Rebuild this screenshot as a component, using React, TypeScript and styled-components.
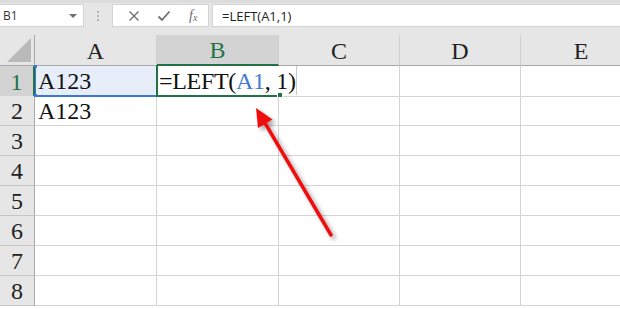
import styled, { createGlobalStyle, css } from "styled-components";

const GlobalStyle = createGlobalStyle`
  html, body {
    margin: 0;
    padding: 0;
    background: #ffffff;
  }
  body {
    width: 620px;
    height: 309px;
    overflow: hidden;
  }
`

const COLS = ["A", "B", "C", "D", "E"]
const ROWS = [1, 2, 3, 4, 5, 6, 7, 8]
const GREEN = "#217346"
const BLUE = "#3a78d6"

const App = () => {
  return (
    <Page>
      <GlobalStyle />
      <Toolbar>
        <NameBox>
          <span>B1</span>
          <Caret />
        </NameBox>
        <Grip>
          <i />
          <i />
          <i />
        </Grip>
        <ButtonBox>
          <ToolIcon>
            <svg width="12" height="12" viewBox="0 0 12 12">
              <path d="M1.5 1.5 L10.5 10.5 M10.5 1.5 L1.5 10.5" stroke="#707070" strokeWidth="1.4" fill="none" />
            </svg>
          </ToolIcon>
          <ToolIcon>
            <svg width="14" height="12" viewBox="0 0 14 12">
              <path d="M1.5 6.5 L5 10 L12.5 1.5" stroke="#707070" strokeWidth="1.8" fill="none" />
            </svg>
          </ToolIcon>
          <ToolIcon>
            <Fx>
              f<sub>x</sub>
            </Fx>
          </ToolIcon>
        </ButtonBox>
        <FormulaInput>=LEFT(A1,1)</FormulaInput>
      </Toolbar>

      <Sheet>
        <Corner>
          <svg width="24" height="24" viewBox="0 0 24 24">
            <polygon points="24,0 24,24 0,24" fill="#b9b9b9" />
          </svg>
        </Corner>
        {COLS.map((c) => (
          <ColHead key={c} $active={c === "B"}>
            {c}
          </ColHead>
        ))}

        {ROWS.map((r) => (
          <Row key={r}>
            <RowHead $active={r === 1} $first={r === 1}>
              {r}
            </RowHead>
            {COLS.map((c) => {
              if (r === 1 && c === "A") {
                return (
                  <RefCell key={c} $first>
                    A123
                    <Handle $x="left" $y="top" />
                    <Handle $x="right" $y="top" />
                    <Handle $x="left" $y="bottom" />
                    <Handle $x="right" $y="bottom" />
                  </RefCell>
                )
              }
              if (r === 1 && c === "B") {
                return (
                  <ActiveCell key={c}>
                    <EditBox>
                      =LEFT(<Ref>A1</Ref>, 1)
                    </EditBox>
                    <FillHandle />
                  </ActiveCell>
                )
              }
              return (
                <Cell key={c} $first={r === 1}>
                  {r === 2 && c === "A" ? "A123" : ""}
                </Cell>
              )
            })}
          </Row>
        ))}
      </Sheet>

      <Arrow width="620" height="309" viewBox="0 0 620 309">
        <defs>
          <filter id="sh" x="-20%" y="-20%" width="140%" height="140%">
            <feDropShadow dx="3" dy="3" stdDeviation="2" floodColor="#000" floodOpacity="0.35" />
          </filter>
        </defs>
        <g filter="url(#sh)">
          <line x1="331" y1="235" x2="265" y2="123" stroke="#f01010" strokeWidth="3.5" strokeLinecap="round" />
          <polygon points="256,108 272.5,119.5 258,128" fill="#f01010" />
        </g>
      </Arrow>
    </Page>
  )
}

export default App

const Page = styled.div`
  position: relative;
  width: 620px;
  height: 309px;
  overflow: hidden;
  background: #ffffff;
`

const Toolbar = styled.div`
  height: 36px;
  box-sizing: border-box;
  padding-top: 4px;
  background: #e6e6e6;
  border-top: 3px solid #dcdcdc;
  padding-top: 1px;
  display: flex;
  align-items: flex-start;
`

const boxBase = css`
  height: 23px;
  box-sizing: border-box;
  background: #ffffff;
  border: 1px solid #d4d4d4;
  display: flex;
  align-items: center;
`

const NameBox = styled.div`
  ${boxBase};
  width: 84px;
  border-left: none;
  padding: 0 4px 0 3px;
  justify-content: space-between;
  font-family: "Open Sans", "Noto Sans", sans-serif;
  font-size: 12px;
  color: #333333;
`

const Caret = styled.span`
  width: 0;
  height: 0;
  border-left: 4px solid transparent;
  border-right: 4px solid transparent;
  border-top: 4px solid #6f6f6f;
  margin-right: 2px;
`

const Grip = styled.div`
  width: 28px;
  height: 23px;
  display: flex;
  flex-direction: column;
  align-items: center;
  justify-content: center;
  gap: 2px;

  i {
    display: block;
    width: 2px;
    height: 2px;
    background: #b5b5b5;
  }
`

const ButtonBox = styled.div`
  ${boxBase};
  width: 97px;
  padding-left: 6px;
  gap: 0;
`

const ToolIcon = styled.div`
  width: 31px;
  height: 21px;
  display: flex;
  align-items: center;
  justify-content: center;
`

const Fx = styled.span`
  font-family: "Liberation Serif", serif;
  font-style: italic;
  font-size: 14px;
  color: #6a6a6a;

  sub {
    font-size: 10px;
    vertical-align: -1px;
  }
`

const FormulaInput = styled.div`
  ${boxBase};
  flex: 1;
  margin-left: 3px;
  border-right: none;
  padding-left: 9px;
  font-family: "Open Sans", "Noto Sans", sans-serif;
  font-size: 13px;
  color: #222222;
`

const Sheet = styled.div`
  display: grid;
  grid-template-columns: 35px 122px 122px 121px 121px 121px;
  grid-auto-rows: 30px;
  grid-template-rows: 31px;
  background: #ffffff;
  font-family: "Liberation Serif", "Times New Roman", serif;
  font-size: 24px;
  color: #111111;
  margin-top: -1px;
`

const Row = styled.div`
  display: contents;
`

const Corner = styled.div`
  background: #e6e6e6;
  border-right: 1px solid #a9a9a9;
  border-bottom: 1px solid #a9a9a9;
  display: flex;
  align-items: flex-end;
  justify-content: flex-end;
  padding: 0 3px 3px 0;
`

const ColHead = styled.div<{ $active?: boolean }>`
  background: ${(p) => (p.$active ? "#d3d3d3" : "#e6e6e6")};
  border-right: 1px solid #cfcfcf;
  border-bottom: ${(p) => (p.$active ? `2px solid ${GREEN}` : "1px solid #a9a9a9")};
  color: ${(p) => (p.$active ? GREEN : "#222222")};
  display: flex;
  align-items: center;
  justify-content: center;
  padding-top: 2px;
`

const RowHead = styled.div<{ $active?: boolean; $first?: boolean }>`
  background: ${(p) => (p.$active ? "#d3d3d3" : "#e6e6e6")};
  border-right: ${(p) => (p.$active ? `2px solid ${GREEN}` : "1px solid #a9a9a9")};
  border-bottom: 1px solid #c6c6c6;
  color: ${(p) => (p.$active ? GREEN : "#222222")};
  height: ${(p) => (p.$first ? "31px" : "30px")};
  box-sizing: border-box;
  display: flex;
  align-items: center;
  justify-content: center;
  padding-top: 2px;
`

const Cell = styled.div<{ $first?: boolean }>`
  border-right: 1px solid #d4d4d4;
  border-bottom: 1px solid #d4d4d4;
  height: ${(p) => (p.$first ? "31px" : "30px")};
  box-sizing: border-box;
  display: flex;
  align-items: center;
  padding: 2px 0 0 3px;
  white-space: nowrap;
`

const RefCell = styled(Cell)`
  position: relative;
  background: #e7eefa;
  border-left: 1px solid ${BLUE};
  border-bottom: 2px solid ${BLUE};
  border-right: none;
  padding-left: 2px;
`

const Handle = styled.span<{ $x: "left" | "right"; $y: "top" | "bottom" }>`
  position: absolute;
  width: 3px;
  height: 3px;
  background: ${BLUE};
  ${(p) => (p.$x === "left" ? "left: -2px;" : "right: -2px;")}
  ${(p) => (p.$y === "top" ? "top: -1px;" : "bottom: -2px;")}
`

const ActiveCell = styled.div`
  position: relative;
  height: 31px;
  box-sizing: border-box;
  border-left: 2px solid ${GREEN};
  border-bottom: 2px solid ${GREEN};
  border-top: 1px solid ${GREEN};
  margin-left: -1px;
  margin-top: -1px;
  height: 32px;
  z-index: 2;
`

const EditBox = styled.div`
  position: absolute;
  left: 0;
  top: 0;
  bottom: 0;
  width: 139px;
  background: #ffffff;
  border-right: 1px solid #c8c8c8;
  display: flex;
  align-items: center;
  padding: 2px 0 0 1px;
  box-sizing: border-box;
  white-space: nowrap;
  letter-spacing: -0.3px;
`

const Ref = styled.span`
  color: #3f7bd1;
`

const FillHandle = styled.span`
  position: absolute;
  left: 119px;
  bottom: -3px;
  width: 4px;
  height: 4px;
  background: ${GREEN};
  border: 1px solid #ffffff;
`

const Arrow = styled.svg`
  position: absolute;
  left: 0;
  top: 0;
  pointer-events: none;
  z-index: 5;
`
